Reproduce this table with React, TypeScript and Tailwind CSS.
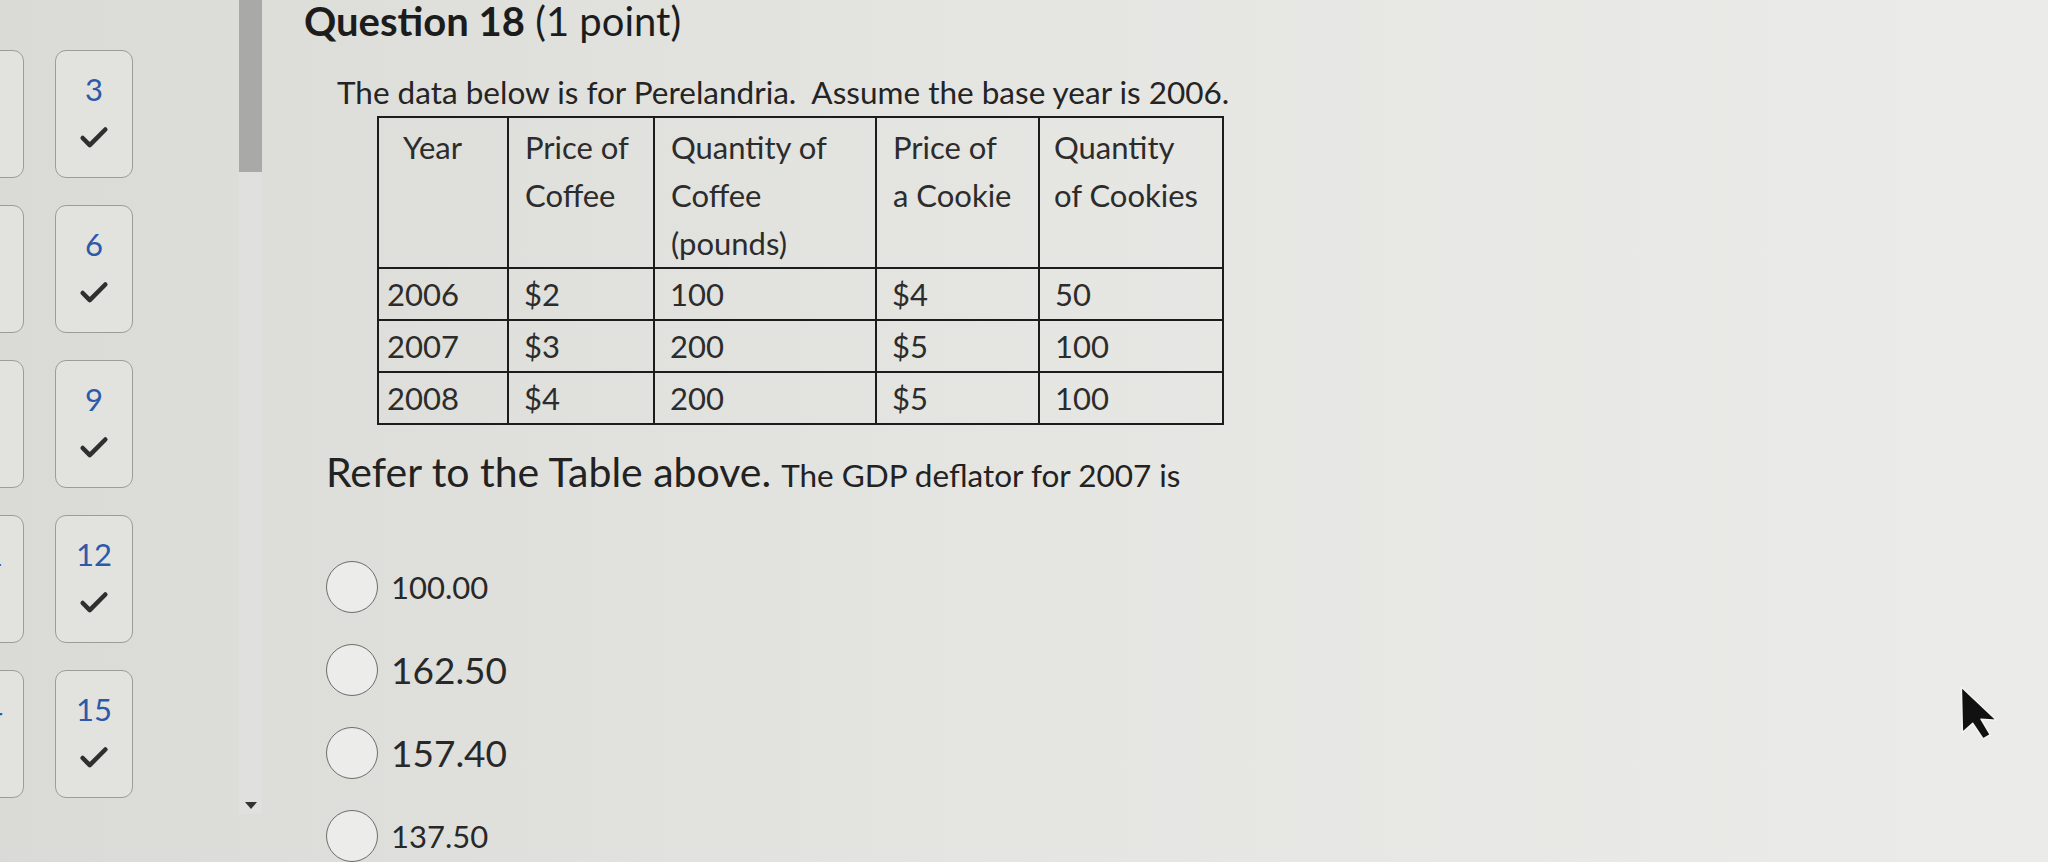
import { Check } from 'lucide-react'

const navNums = [3, 6, 9, 12, 15]
const hiddenNums = [2, 5, 8, 11, 14]

const rows = [
  ['2006', '$2', '100', '$4', '50'],
  ['2007', '$3', '200', '$5', '100'],
  ['2008', '$4', '200', '$5', '100'],
]

// options come in two sizes in the source page
const options = [
  { label: '100.00', big: false },
  { label: '162.50', big: true },
  { label: '157.40', big: true },
  { label: '137.50', big: false },
]

function NavTile({ n }: { n: number }) {
  return (
    <div className="w-[78px] h-[128px] shrink-0 rounded-[11px] border-[1.5px] border-[#9c9c9a] bg-[#e2e2df] flex flex-col items-center pt-[18px]">
      <span className="text-[31px] leading-[40px] text-[#2d5aa8]">{n}</span>
      <Check size={34} strokeWidth={3.2} className="mt-[12px] text-[#2f2f2f]" />
    </div>
  )
}

function Cursor() {
  return (
    <svg width="44" height="56" viewBox="0 0 42 54" className="absolute left-[1958px] top-[686px]">
      <path
        d="M3 1 L4 45 L14 36 L24 51 L31 47 L22 32 L37 33 Z"
        fill="#111"
        stroke="#f4f4f2"
        strokeWidth="1.5"
        strokeLinejoin="round"
      />
    </svg>
  )
}

export default function App() {
  return (
    <div className="relative w-full h-[862px] overflow-hidden flex bg-linear-to-r from-[#dadad7] via-[#e5e5e2] to-[#ebebe9] font-['Lato','Liberation_Sans',sans-serif] text-[#242424]">
      {/* question navigator */}
      <div className="w-[239px] shrink-0 flex pt-[50px] overflow-hidden">
        <div className="-ml-[54px] flex flex-col gap-[27px]">
          {hiddenNums.map((n) => (
            <NavTile key={n} n={n} />
          ))}
        </div>
        <div className="ml-[31px] flex flex-col gap-[27px]">
          {navNums.map((n) => (
            <NavTile key={n} n={n} />
          ))}
        </div>
      </div>

      {/* scrollbar */}
      <div className="w-[23px] shrink-0 flex flex-col">
        <div className="h-[172px] bg-[#a9a9a7]" />
        <div className="h-[624px] bg-[#e0e0de]" />
        <div className="h-[18px] bg-[#e0e0de] flex items-center justify-center">
          <div className="w-0 h-0 border-l-[6px] border-r-[6px] border-t-[7px] border-l-transparent border-r-transparent border-t-[#333]" />
        </div>
      </div>

      {/* question body */}
      <div className="flex-1 pl-[42px]">
        <h2 className="text-[40px] leading-[44px] -mt-[1px] text-[#1c1c1c]">
          <span className="font-bold">Question 18</span> (1 point)
        </h2>

        <p className="ml-[33px] mt-[31px] text-[31.5px] leading-[36px]">
          The data below is for Perelandria.&nbsp; Assume the base year is 2006.
        </p>

        <table className="ml-[73px] mt-[6px] table-fixed border-collapse border-[2.5px] border-[#1c1c1c] text-[31px] text-[#2c2c2c]">
          <colgroup>
            <col className="w-[130px]" />
            <col className="w-[146px]" />
            <col className="w-[222px]" />
            <col className="w-[163px]" />
            <col className="w-[184px]" />
          </colgroup>
          <thead>
            <tr className="h-[150px]">
              <th className="border-2 border-[#1c1c1c] align-top text-left font-normal leading-[48px] pt-[5px] pl-[24px]">Year</th>
              <th className="border-2 border-[#1c1c1c] align-top text-left font-normal leading-[48px] pt-[5px] pl-[16px]">
                Price of
                <br />
                Coffee
              </th>
              <th className="border-2 border-[#1c1c1c] align-top text-left font-normal leading-[48px] pt-[5px] pl-[16px]">
                Quantity of
                <br />
                Coffee
                <br />
                (pounds)
              </th>
              <th className="border-2 border-[#1c1c1c] align-top text-left font-normal leading-[48px] pt-[5px] pl-[16px]">
                Price of
                <br />a Cookie
              </th>
              <th className="border-2 border-[#1c1c1c] align-top text-left font-normal leading-[48px] pt-[5px] pl-[14px]">
                Quantity
                <br />
                of Cookies
              </th>
            </tr>
          </thead>
          <tbody>
            {rows.map((r) => (
              <tr key={r[0]} className="h-[52px]">
                {r.map((c, i) => (
                  <td
                    key={i}
                    className={`border-2 border-[#1c1c1c] leading-[32px] ${i === 0 ? 'pl-[8px]' : 'pl-[15px]'}`}
                  >
                    {c}
                  </td>
                ))}
              </tr>
            ))}
          </tbody>
        </table>

        <p className="ml-[22px] mt-[22px] h-[50px] flex items-baseline gap-[10px] text-[#222]">
          <span className="text-[41px] leading-[50px]">Refer to the Table above.</span>
          <span className="text-[31.5px] leading-[50px]">The GDP deflator for 2007 is</span>
        </p>

        <div className="ml-[22px] mt-[64px] flex flex-col gap-[31px]">
          {options.map((o) => (
            <label key={o.label} className="flex items-center h-[52px]">
              <span className="w-[52px] h-[52px] rounded-full border-[1.5px] border-[#6c6c6c] bg-[#ececea] shrink-0" />
              <span className={`ml-[13px] text-[#282828] ${o.big ? 'text-[37px]' : 'text-[31px]'}`}>{o.label}</span>
            </label>
          ))}
        </div>
      </div>

      <Cursor />
    </div>
  )
}
